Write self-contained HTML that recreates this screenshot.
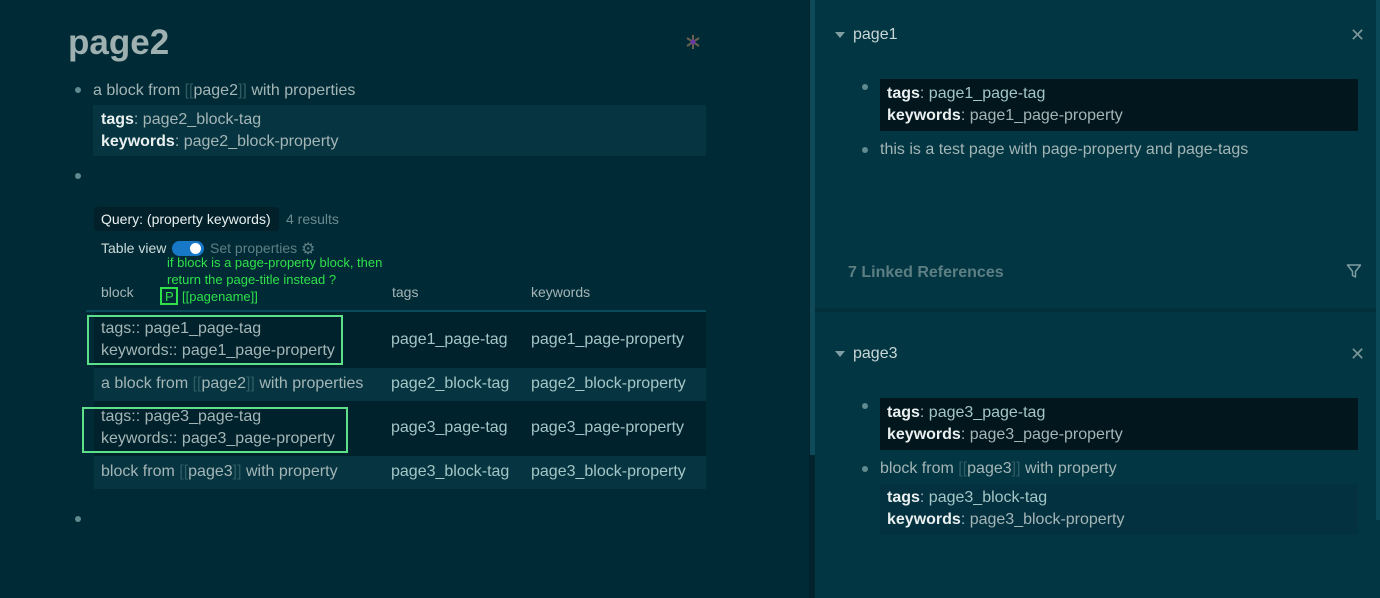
<!DOCTYPE html>
<html><head><meta charset="utf-8"><style>
*{margin:0;padding:0;box-sizing:border-box}
body{width:1380px;height:598px;overflow:hidden;background:#002b36;font-family:"Liberation Sans",sans-serif;font-size:16px;color:#a4b5b6;position:relative}
.a{position:absolute;white-space:nowrap}
.b{color:#eaf0f0}
.v{color:#a4c6c6}
.dot{position:absolute;width:6px;height:6px;border-radius:50%;background:#5f8a8f}
.br{color:#2f5b63}
.g{color:#2ee04a;font-size:13px}
</style></head><body>
<div class="a" style="left:68px;top:23px;font-size:35px;font-weight:bold;color:#9fb0b0">page2</div>
<svg class="a" style="left:685px;top:34px" width="16" height="16" viewBox="0 0 16 16"><g stroke="#6b6050" stroke-width="2"><line x1="8" y1="1" x2="8" y2="15"/><line x1="2" y1="4" x2="14" y2="12"/><line x1="14" y1="4" x2="2" y2="12"/></g><circle cx="8" cy="8" r="2.5" fill="#6a3aa0"/></svg>

<div class="dot" style="left:75px;top:87px"></div>
<div class="a" style="left:93px;top:82px">a block from <span class="br">[[</span>page2<span class="br">]]</span> with properties</div>
<div class="a" style="left:93px;top:105px;width:613px;height:51px;background:#063541"></div>
<div class="a" style="left:101px;top:111px"><b class="b">tags</b>: page2_block-tag</div>
<div class="a" style="left:101px;top:133px"><b class="b">keywords</b>: page2_block-property</div>

<div class="dot" style="left:75px;top:173px"></div>

<div class="a" style="left:94px;top:207px;width:185px;height:24px;background:#01202a;border-radius:4px"></div>
<div class="a b" style="left:101px;top:211px;font-size:14px">Query: (property keywords)</div>
<div class="a" style="left:286px;top:211px;font-size:14px;color:#6b8a8e">4 results</div>
<div class="a b" style="left:101px;top:240px;font-size:14px;color:#cfdcdc">Table view</div>
<div class="a" style="left:172px;top:241px;width:32px;height:15px;border-radius:8px;background:#1778c8"></div>
<div class="a" style="left:190px;top:243px;width:11px;height:11px;border-radius:50%;background:#fff"></div>
<div class="a" style="left:210px;top:240px;font-size:14px;color:#5f7f84">Set properties</div>
<div class="a" style="left:301px;top:239px;font-size:16px;color:#5f7f84">⚙</div>
<div class="a g" style="left:167px;top:255px">if block is a page-property block, then</div>
<div class="a g" style="left:167px;top:272px">return the page-title instead ?</div>
<div class="a" style="left:160px;top:287px;width:18px;height:18px;border:2px solid #2ee04a"></div>
<div class="a g" style="left:165px;top:289px">P</div>
<div class="a g" style="left:182px;top:289px">[[pagename]]</div>
<div class="a" style="left:101px;top:284px;font-size:14px">block</div>
<div class="a" style="left:392px;top:284px;font-size:14px">tags</div>
<div class="a" style="left:531px;top:284px;font-size:14px">keywords</div>
<div class="a" style="left:86px;top:310px;width:620px;height:2px;background:#0b4a5a"></div>

<div class="a" style="left:94px;top:312px;width:612px;height:56px;background:#00222c"></div>
<div class="a" style="left:94px;top:368px;width:612px;height:33px;background:#063541"></div>
<div class="a" style="left:94px;top:401px;width:612px;height:55px;background:#00222c"></div>
<div class="a" style="left:94px;top:456px;width:612px;height:33px;background:#063541"></div>
<div class="a" style="left:87px;top:315px;width:256px;height:50px;border:2px solid #5ee08a"></div>
<div class="a" style="left:82px;top:407px;width:266px;height:46px;border:2px solid #5ee08a"></div>
<div class="a" style="left:101px;top:320px">tags:: page1_page-tag</div>
<div class="a" style="left:101px;top:342px">keywords:: page1_page-property</div>
<div class="a" style="left:101px;top:375px">a block from <span class="br">[[</span>page2<span class="br">]]</span> with properties</div>
<div class="a" style="left:101px;top:408px">tags:: page3_page-tag</div>
<div class="a" style="left:101px;top:430px">keywords:: page3_page-property</div>
<div class="a" style="left:101px;top:463px">block from <span class="br">[[</span>page3<span class="br">]]</span> with property</div>
<div class="a v" style="left:391px;top:331px">page1_page-tag</div><div class="a v" style="left:531px;top:331px">page1_page-property</div>
<div class="a v" style="left:391px;top:375px">page2_block-tag</div><div class="a v" style="left:531px;top:375px">page2_block-property</div>
<div class="a v" style="left:391px;top:419px">page3_page-tag</div><div class="a v" style="left:531px;top:419px">page3_page-property</div>
<div class="a v" style="left:391px;top:463px">page3_block-tag</div><div class="a v" style="left:531px;top:463px">page3_block-property</div>
<div class="dot" style="left:75px;top:516px"></div>

<div class="a" style="left:809px;top:0;width:6px;height:598px;background:#01232c"></div>
<div class="a" style="left:810px;top:0;width:5px;height:455px;background:#0e4a5a"></div>
<div class="a" style="left:815px;top:0;width:565px;height:598px;background:#023642"></div>
<div class="a" style="left:815px;top:308px;width:565px;height:4px;background:#022f3a"></div>
<div class="a" style="left:1376px;top:0;width:4px;height:520px;background:#0a4a58"></div>

<div class="a" style="left:835px;top:32px;width:0;height:0;border-left:5px solid transparent;border-right:5px solid transparent;border-top:6px solid #7f9ea2"></div>
<div class="a b" style="left:853px;top:26px;color:#c9d6d6">page1</div>
<div class="a" style="left:1350px;top:25px;font-size:18px;color:#7a9598">✕</div>
<div class="dot" style="left:862px;top:84px"></div>
<div class="a" style="left:880px;top:79px;width:478px;height:52px;background:#01161d"></div>
<div class="a" style="left:887px;top:85px"><b class="b">tags</b>: <span class="v">page1_page-tag</span></div>
<div class="a" style="left:887px;top:107px"><b class="b">keywords</b>: page1_page-property</div>
<div class="dot" style="left:862px;top:147px"></div>
<div class="a" style="left:880px;top:141px">this is a test page with page-property and page-tags</div>
<div class="a" style="left:848px;top:264px;font-weight:bold;color:#5d7f84">7 Linked References</div>
<svg class="a" style="left:1346px;top:263px" width="16" height="16" viewBox="0 0 16 16"><path d="M1.5 2h13l-5 6.5v5.5l-3-1.5v-4z" fill="none" stroke="#7f9ea2" stroke-width="1.5" stroke-linejoin="round"/></svg>

<div class="a" style="left:835px;top:351px;width:0;height:0;border-left:5px solid transparent;border-right:5px solid transparent;border-top:6px solid #7f9ea2"></div>
<div class="a b" style="left:853px;top:345px;color:#c9d6d6">page3</div>
<div class="a" style="left:1350px;top:344px;font-size:18px;color:#7a9598">✕</div>
<div class="dot" style="left:862px;top:403px"></div>
<div class="a" style="left:880px;top:398px;width:478px;height:52px;background:#01161d"></div>
<div class="a" style="left:887px;top:404px"><b class="b">tags</b>: <span class="v">page3_page-tag</span></div>
<div class="a" style="left:887px;top:426px"><b class="b">keywords</b>: page3_page-property</div>
<div class="dot" style="left:862px;top:466px"></div>
<div class="a" style="left:880px;top:460px">block from <span class="br">[[</span>page3<span class="br">]]</span> with property</div>
<div class="a" style="left:880px;top:484px;width:478px;height:51px;background:#043140"></div>
<div class="a" style="left:887px;top:489px"><b class="b">tags</b>: <span class="v">page3_block-tag</span></div>
<div class="a" style="left:887px;top:511px"><b class="b">keywords</b>: page3_block-property</div>
</body></html>
